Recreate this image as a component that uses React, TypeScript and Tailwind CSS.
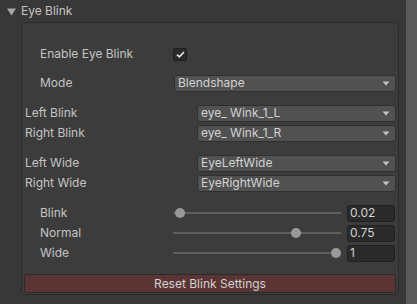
import React from 'react';

const font = { fontFamily: 'Inter, "Noto Sans", sans-serif' };

function Arrow() {
  return (
    <svg width="8" height="5" viewBox="0 0 8 5" className="shrink-0">
      <path d="M0.5 0.5 H7.5 L4 4.5 Z" fill="#c4c4c4" />
    </svg>
  );
}

function Dropdown({ value, className }: { value: string; className: string }) {
  return (
    <div
      className={`flex h-[17px] items-center justify-between rounded-[3px] border border-[#303030] bg-[#515151] pl-[3px] pr-[5px] text-[12px] text-[#d2d2d2] ${className}`}
    >
      <span className="leading-none">{value}</span>
      <Arrow />
    </div>
  );
}

function Slider({ label, value, pos }: { label: string; value: string; pos: number }) {
  return (
    <div className="flex h-[20px] items-center">
      <span className="w-[149px] shrink-0 pl-[16px] text-[12px] text-[#c4c4c4]">{label}</span>
      <div className="relative flex h-[20px] w-[168px] shrink-0 items-center">
        <div className="h-[2px] w-full bg-[#5e5e5e]" />
        <div
          className="absolute top-[5px] h-[10px] w-[10px] rounded-full bg-[#999999]"
          style={{ left: `${pos}px` }}
        />
      </div>
      <div className="ml-[6px] flex h-[17px] w-[48px] shrink-0 items-center rounded-[3px] border border-[#212121] bg-[#2a2a2a] pl-[2px] text-[12px] text-[#d2d2d2]">
        {value}
      </div>
    </div>
  );
}

function Field({ label, value }: { label: string; value: string }) {
  return (
    <div className="flex h-[20px] items-center">
      <span className="w-[173px] shrink-0 pl-[1px] text-[12px] text-[#c4c4c4]">{label}</span>
      <Dropdown value={value} className="w-[199px]" />
    </div>
  );
}

export default function App() {
  return (
    <div className="flex h-[304px] w-[417px] overflow-hidden bg-[#383838]" style={font}>
      <div className="flex w-[406px] flex-col">
        <div className="flex h-[22px] items-center">
          <svg width="9" height="8" viewBox="0 0 9 8" className="ml-[7px] mt-[1px]">
            <path d="M0 0.5 H9 L4.5 7.5 Z" fill="#a8a8a8" />
          </svg>
          <span className="ml-[5px] text-[12px] text-[#c4c4c4]">Eye Blink</span>
        </div>

        <div className="ml-[21px] flex h-[273px] w-[378px] flex-col rounded-[4px] border border-[#2b2b2b] bg-[#3c3c3c] px-[2px] pt-[21px]">
          <div className="flex h-[20px] items-center">
            <span className="w-[149px] shrink-0 pl-[16px] text-[12px] text-[#c4c4c4]">Enable Eye Blink</span>
            <div className="flex h-[13px] w-[14px] items-center justify-center rounded-[2px] border border-[#1e1e1e] bg-[#2a2a2a]">
              <svg width="9" height="7" viewBox="0 0 9 7">
                <path d="M1 3.6 L3.4 5.8 L8 1" fill="none" stroke="#e8e8e8" strokeWidth="1.6" />
              </svg>
            </div>
          </div>

          <div className="mt-[9px] flex h-[20px] items-center">
            <span className="w-[150px] shrink-0 pl-[16px] text-[12px] text-[#c4c4c4]">Mode</span>
            <Dropdown value="Blendshape" className="w-[222px]" />
          </div>

          <div className="mt-[10px] flex flex-col">
            <Field label="Left Blink" value="eye_ Wink_1_L" />
            <Field label="Right Blink" value="eye_ Wink_1_R" />
          </div>

          <div className="mt-[10px] flex flex-col">
            <Field label="Left Wide" value="EyeLeftWide" />
            <Field label="Right Wide" value="EyeRightWide" />
          </div>

          <div className="mt-[10px] flex flex-col">
            <Slider label="Blink" value="0.02" pos={2} />
            <Slider label="Normal" value="0.75" pos={118} />
            <Slider label="Wide" value="1" pos={158} />
          </div>

          <button className="mt-[11px] flex h-[19px] w-[372px] items-center justify-center rounded-[3px] border border-[#2a2a2a] bg-[#5a3534] text-[12px] text-[#d2d2d2]">
            Reset Blink Settings
          </button>
        </div>
      </div>
      <div className="w-[11px] bg-[#5a5a5a]" />
    </div>
  );
}
